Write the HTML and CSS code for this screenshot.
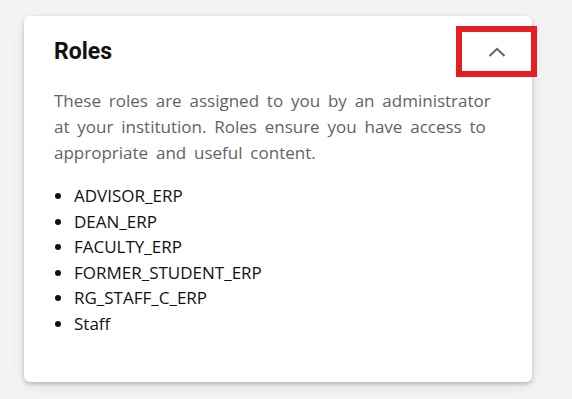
FILE: index.html
```html
<!DOCTYPE html>
<html lang="en">
<head>
<meta charset="utf-8">
<title>Roles</title>
<link rel="stylesheet" href="styles.css">
</head>
<body>
<section class="card">
  <header class="card-header">
    <h2 class="card-title">Roles</h2>
    <button class="toggle" type="button" aria-label="Collapse">
      <svg width="18" height="10" viewBox="0 0 18 10" aria-hidden="true"><path d="M1.5 9 L9 1.8 L16.5 9" fill="none" stroke="#5f6368" stroke-width="2"/></svg>
    </button>
  </header>
  <p class="desc">These roles are assigned to you by an administrator at your institution. Roles ensure you have access to appropriate and useful content.</p>
  <ul class="roles">
    <li>ADVISOR_ERP</li>
    <li>DEAN_ERP</li>
    <li>FACULTY_ERP</li>
    <li>FORMER_STUDENT_ERP</li>
    <li>RG_STAFF_C_ERP</li>
    <li>Staff</li>
  </ul>
</section>
</body>
</html>
```
FILE: styles.css
```css
html, body {
  margin: 0;
  padding: 0;
}
body {
  background: #f4f4f4;
  padding: 16px 40px 17px 24px;
  font-family: "Open Sans", "Noto Sans", sans-serif;
}
.card {
  width: 508px;
  box-sizing: border-box;
  background: #fff;
  border-radius: 6px;
  box-shadow: 0 2px 4px rgba(0,0,0,0.22), 0 4px 18px rgba(0,0,0,0.07);
  padding: 10px 30px 30px 30px;
  height: 366px;
}
.card-header {
  display: flex;
  align-items: center;
  justify-content: space-between;
  margin-right: -35px;
}
.card-title {
  margin: 0;
  font-family: Roboto, "Liberation Sans", sans-serif;
  font-weight: 700;
  font-size: 23px;
  color: #111;
}
.toggle {
  width: 81px;
  height: 51px;
  box-sizing: border-box;
  border: 6px solid #e41e24;
  background: transparent;
  padding: 0;
  display: flex;
  align-items: center;
  justify-content: center;
  cursor: pointer;
}
.desc {
  margin: 11px 0 17px;
  font-size: 17px;
  line-height: 26px;
  word-spacing: 3.4px;
  color: #5f6368;
}
.roles {
  margin: 0;
  padding-left: 20px;
  font-size: 17px;
  line-height: 25.5px;
  color: #111;
}
```
